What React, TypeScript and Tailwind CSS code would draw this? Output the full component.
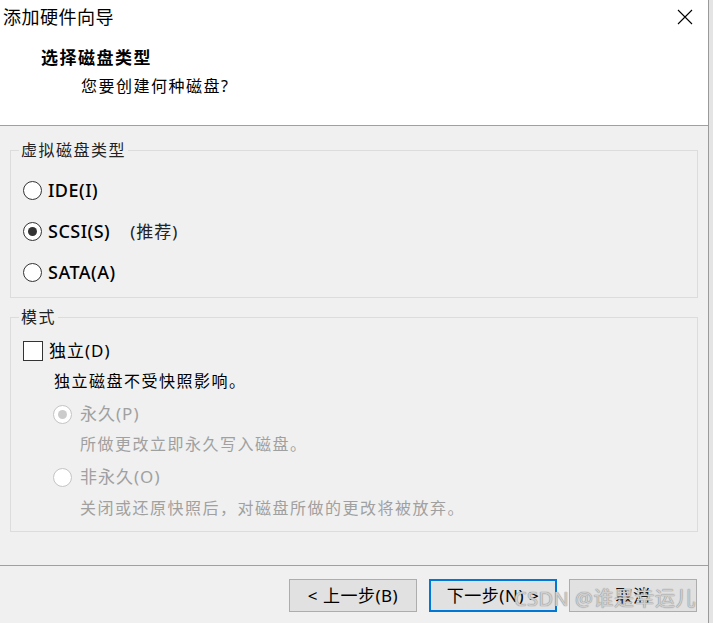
import React from "react";

const FONT = '"Noto Sans", "Noto Sans CJK SC", sans-serif';

function Radio({ checked = false, disabled = false }: { checked?: boolean; disabled?: boolean }) {
  return (
    <span
      className={`flex h-[19px] w-[19px] shrink-0 items-center justify-center rounded-full border bg-white ${
        disabled ? "border-[#c4c4c4]" : "border-[#333333]"
      }`}
    >
      {checked && (
        <span className={`h-[9px] w-[9px] rounded-full ${disabled ? "bg-[#cccccc]" : "bg-[#333333]"}`} />
      )}
    </span>
  );
}

function Button({ label, focused = false }: { label: string; focused?: boolean }) {
  return (
    <button
      className={`h-[33px] w-[128px] bg-[#e1e1e1] text-[17px] tracking-[0.5px] text-black ${
        focused ? "border-2 border-[#0078d7]" : "border border-[#adadad]"
      }`}
    >
      {label}
    </button>
  );
}

export default function App() {
  return (
    <div className="flex h-[623px] w-[713px] overflow-hidden bg-[#f0f0f0]" style={{ fontFamily: FONT }}>
      <div className="relative flex w-[709px] flex-col border-r border-[#9a9a9a]">
        {/* header */}
        <div className="h-[126px] border-b border-[#a0a0a0] bg-white">
          <div className="flex h-[34px] items-center justify-between pl-[3px] pr-[15px]">
            <span className="text-[18px] leading-none tracking-[0.5px] text-black">添加硬件向导</span>
            <svg width="16" height="16" viewBox="0 0 16 16">
              <path d="M1 1 L15 15 M15 1 L1 15" stroke="#000" strokeWidth="1.1" fill="none" />
            </svg>
          </div>
          <div className="mt-[11px] flex h-[26px] items-center pl-[41px] text-[17px] font-bold tracking-[1.5px] text-black">
            选择磁盘类型
          </div>
          <div className="mt-[2px] flex h-[26px] items-center pl-[81px] text-[16px] tracking-[1.5px] text-black">
            您要创建何种磁盘?
          </div>
        </div>

        {/* body */}
        <div className="flex-1 px-[10px] pt-[14px]">
          <fieldset className="w-[688px] border border-[#dcdcdc] pb-[4px] pl-[12px]">
            <legend className="ml-[-4px] px-[2px] text-[16px] leading-[20px] tracking-[1.5px] text-[#222]">
              虚拟磁盘类型
            </legend>
            <div className="pt-[10px]">
              <div className="flex h-[41px] items-center gap-[6px] text-[18px] font-medium tracking-[0.5px] text-black">
                <Radio />
                <span>IDE(I)</span>
              </div>
              <div className="flex h-[41px] items-center gap-[6px] text-[18px] font-medium tracking-[0.5px] text-black">
                <Radio checked />
                <span>SCSI(S)</span>
                <span className="ml-[14px] text-[17px] font-normal tracking-[1px] text-[#222]">(推荐)</span>
              </div>
              <div className="flex h-[41px] items-center gap-[6px] text-[18px] font-medium tracking-[0.5px] text-black">
                <Radio />
                <span>SATA(A)</span>
              </div>
            </div>
          </fieldset>

          <fieldset className="mt-[9px] w-[688px] border border-[#dcdcdc] pb-[12px] pl-[12px]">
            <legend className="ml-[-4px] px-[2px] text-[16px] leading-[20px] tracking-[1.5px] text-[#222]">
              模式
            </legend>
            <div className="pt-[10px] text-[16px]">
              <div className="flex h-[28px] items-center gap-[6px] text-black">
                <span className="h-[20px] w-[20px] shrink-0 border border-[#333333] bg-white" />
                <span className="text-[17px] tracking-[1px]">独立(D)</span>
              </div>
              <div className="flex h-[32px] items-center pl-[31px] tracking-[1.5px] text-black">
                独立磁盘不受快照影响。
              </div>
              <div className="flex h-[34px] items-center gap-[8px] pl-[30px] text-[#a0a0a0]">
                <Radio checked disabled />
                <span className="text-[17px] tracking-[1px]">永久(P)</span>
              </div>
              <div className="flex h-[26px] items-center pl-[57px] tracking-[1.5px] text-[#a0a0a0]">
                所做更改立即永久写入磁盘。
              </div>
              <div className="flex h-[40px] items-center gap-[8px] pl-[30px] text-[#a0a0a0]">
                <Radio disabled />
                <span className="text-[17px] tracking-[1px]">非永久(O)</span>
              </div>
              <div className="flex h-[22px] items-center pl-[57px] tracking-[1.5px] text-[#a0a0a0]">
                关闭或还原快照后，对磁盘所做的更改将被放弃。
              </div>
            </div>
          </fieldset>
        </div>

        {/* footer */}
        <div className="flex h-[58px] items-start justify-end gap-[12px] border-t border-[#a0a0a0] pr-[11px] pt-[13px]">
          <Button label="< 上一步(B)" />
          <Button label="下一步(N) >" focused />
          <Button label="取消" />
        </div>

        <span className="absolute bottom-[9px] right-[12px] text-[20px] tracking-[0.5px] text-[#d8d8d8]/90 [text-shadow:0_0_1px_#888,0_0_1px_#999]">
          CSDN @谁是幸运儿
        </span>
      </div>
      <div className="w-[4px] bg-[#e4e4e4]" />
    </div>
  );
}
